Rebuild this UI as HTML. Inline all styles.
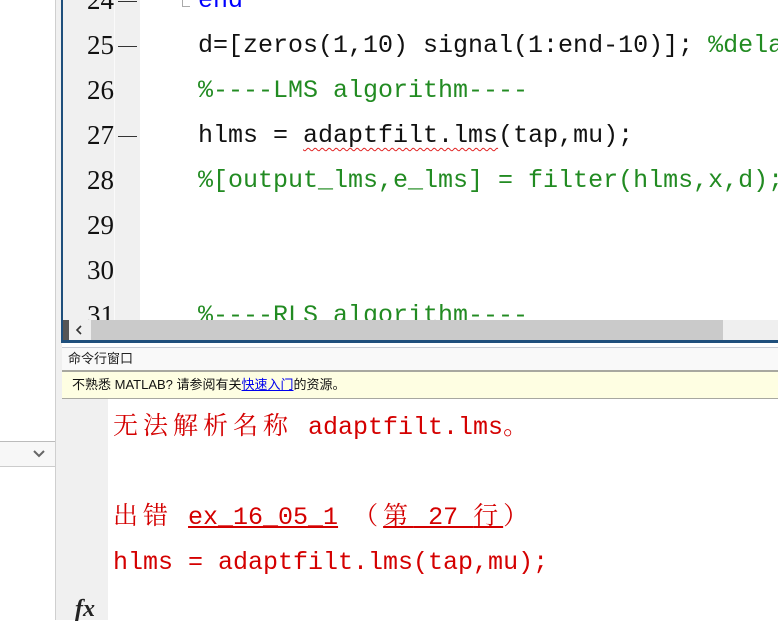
<!DOCTYPE html>
<html><head><meta charset="utf-8"><style>
*{margin:0;padding:0;box-sizing:border-box}
body{width:778px;height:620px;overflow:hidden;background:#fff;position:relative;font-family:"Liberation Mono","Noto Serif CJK SC",monospace}
.a{position:absolute}
.code{font-size:25px;line-height:45px;white-space:pre;letter-spacing:0}
.c{letter-spacing:5px}
.ln{position:absolute;left:80px;width:34px;text-align:right;font-family:"Liberation Serif",serif;font-size:27px;color:#111;line-height:45px}
.dash{position:absolute;left:118px;width:19px;height:1px;background:#333}
</style></head><body>
<div class="a" style="left:0;top:0;width:55px;height:620px;background:#fff"></div>
<div class="a" style="left:55px;top:0;width:1px;height:620px;background:#cfcfcf"></div>
<div class="a" style="left:56px;top:0;width:6px;height:620px;background:#f0f0f0"></div>
<div class="a" style="left:0;top:441px;width:55px;height:1px;background:#bbb"></div>
<div class="a" style="left:0;top:442px;width:55px;height:24px;background:#f7f7f7"></div>
<div class="a" style="left:0;top:466px;width:55px;height:1px;background:#ccc"></div>
<svg class="a" style="left:32px;top:449px" width="14" height="10"><path d="M2 2 L7 7 L12 2" stroke="#666" stroke-width="2" fill="none"/></svg>
<div class="a" style="left:61px;top:0;width:2px;height:343px;background:#1f4f7c"></div>
<div class="a" style="left:63px;top:0;width:77px;height:320px;background:#f0f0f0"></div>
<div class="a" style="left:114px;top:0;width:1px;height:320px;background:#fafafa"></div>
<div class="ln" style="top:-22px">24</div><div class="dash" style="top:1px"></div>
<div class="ln" style="top:23px">25</div><div class="dash" style="top:46px"></div>
<div class="ln" style="top:68px">26</div>
<div class="ln" style="top:113px">27</div><div class="dash" style="top:136px"></div>
<div class="ln" style="top:158px">28</div>
<div class="ln" style="top:203px">29</div>
<div class="ln" style="top:248px">30</div>
<div class="ln" style="top:293px">31</div>
<div class="a" style="left:182px;top:0;width:1px;height:6px;background:#aaa"></div>
<div class="a" style="left:182px;top:6px;width:8px;height:1px;background:#aaa"></div>
<div class="a code" style="left:198px;top:-22px;color:#0000ff">end</div>
<div class="a code" style="left:198px;top:23px;color:#111">d=[zeros(1,10) signal(1:end-10)]; <span style="color:#228b22">%delay</span></div>
<div class="a code" style="left:198px;top:68px;color:#228b22">%----LMS algorithm----</div>
<div class="a code" style="left:198px;top:113px;color:#111">hlms = <span style="text-decoration:underline wavy #e02020;text-underline-offset:5px;text-decoration-thickness:1px">adaptfilt.lms</span>(tap,mu);</div>
<div class="a code" style="left:198px;top:158px;color:#228b22">%[output_lms,e_lms] = filter(hlms,x,d);</div>
<div class="a code" style="left:198px;top:293px;color:#228b22">%----RLS algorithm----</div>
<div class="a" style="left:63px;top:320px;width:715px;height:20px;background:#efefef"></div>
<div class="a" style="left:63px;top:320px;width:6px;height:20px;background:#555"></div>
<div class="a" style="left:91px;top:320px;width:632px;height:20px;background:#cacaca"></div>
<svg class="a" style="left:74px;top:324px" width="10" height="12"><path d="M7 2 L3 6 L7 10" stroke="#333" stroke-width="1.6" fill="none"/></svg>
<div class="a" style="left:61px;top:340px;width:717px;height:3px;background:#1f4f7c"></div>
<div class="a" style="left:62px;top:343px;width:716px;height:277px;background:#fff"></div>
<div class="a" style="left:62px;top:347px;width:716px;height:1px;background:#c8ccd4"></div>
<div class="a" style="left:62px;top:348px;width:716px;height:22px;background:#f9f9f9;font-family:'Liberation Sans','Noto Sans CJK SC',sans-serif;font-size:13px;line-height:22px;padding-left:6px;color:#222">命令行窗口</div>
<div class="a" style="left:62px;top:370px;width:716px;height:2px;background:#a8a8a0"></div>
<div class="a" style="left:62px;top:372px;width:716px;height:26px;background:#fefee2;font-family:'Liberation Sans','Noto Sans CJK SC',sans-serif;font-size:13px;line-height:26px;padding-left:10px;color:#111">不熟悉 MATLAB? 请参阅有关<span style="color:#0000ee;text-decoration:underline">快速入门</span>的资源。</div>
<div class="a" style="left:62px;top:398px;width:716px;height:1px;background:#a8a8a0"></div>
<div class="a" style="left:62px;top:399px;width:46px;height:221px;background:#f0f0f0"></div>
<div class="a code" style="left:113px;top:405px;color:#d40000"><span class="c">无法解析名称</span> adaptfilt.lms<span class="c">。</span></div>
<div class="a code" style="left:113px;top:495px;color:#d40000"><span class="c">出错</span> <span style="text-decoration:underline">ex_16_05_1</span> <span class="c">（</span><span style="text-decoration:underline"><span class="c">第</span> 27 <span class="c">行</span></span><span class="c">）</span></div>
<div class="a code" style="left:113px;top:540px;color:#d40000">hlms = adaptfilt.lms(tap,mu);</div>
<div class="a" style="left:75px;top:596px;font-family:'Liberation Serif',serif;font-style:italic;font-weight:bold;font-size:24px;color:#222">fx</div>
</body></html>
